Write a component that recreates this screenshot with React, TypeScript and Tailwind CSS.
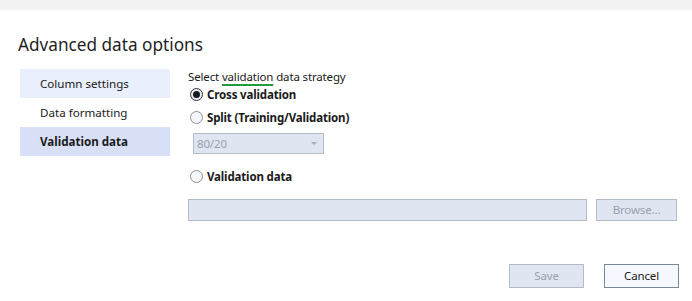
import React from "react";

function Radio({ checked }: { checked?: boolean }) {
  return (
    <span
      className={
        "flex h-[13px] w-[13px] shrink-0 items-center justify-center rounded-full border " +
        (checked ? "border-[#333333] bg-[#e6ecf7]" : "border-[#8f8f8f] bg-[#f4f6fa]")
      }
    >
      {checked && <span className="h-[7px] w-[7px] rounded-full bg-[#1a1a1a]" />}
    </span>
  );
}

export default function App() {
  return (
    <div
      className="h-[301px] w-[692px] overflow-hidden bg-white text-[#1a1a1a]"
      style={{ fontFamily: '"Noto Sans", "Open Sans", sans-serif' }}
    >
      <div className="h-[10px] bg-[#f2f2f2]" />
      <div className="pl-[18px] pt-[22px] text-[17.2px] leading-[25px] text-[#1f1f1f]">
        Advanced data options
      </div>
      <div className="mt-[12px] flex">
        <div className="ml-[20px] flex w-[150px] flex-col text-[11.6px]">
          <div className="flex h-[29px] items-center bg-[#e9effc] pl-[20px]">Column settings</div>
          <div className="flex h-[29px] items-center pl-[20px]">Data formatting</div>
          <div className="flex h-[29px] items-center bg-[#d8e0f7] pl-[20px] font-bold">Validation data</div>
        </div>
        <div className="ml-[18px] flex flex-col text-[11.5px] tracking-[-0.15px]">
          <div className="h-[17px] leading-[15px]">
            Select{" "}
            <span className="underline decoration-[#1f9d3a] decoration-2 underline-offset-[3px]">validation</span>{" "}
            data strategy
          </div>
          <div className="ml-[2px] flex h-[17px] items-center gap-[4px] font-bold">
            <Radio checked />
            Cross validation
          </div>
          <div className="ml-[2px] mt-[6px] flex h-[17px] items-center gap-[4px] font-bold">
            <Radio />
            Split (Training/Validation)
          </div>
          <div className="ml-[5px] mt-[7px] flex h-[21px] w-[131px] items-center justify-between border border-[#b4bcc8] bg-[#dfe6f1] pl-[3px] pr-[6px] text-[#9aa1ab]">
            <span>80/20</span>
            <span className="h-0 w-0 border-x-[3px] border-t-[3px] border-x-transparent border-t-[#a8adb5]" />
          </div>
          <div className="ml-[2px] mt-[14px] flex h-[17px] items-center gap-[4px] font-bold">
            <Radio />
            Validation data
          </div>
          <div className="mt-[14px] flex items-center">
            <div className="h-[22px] w-[399px] border border-[#b4bcc8] bg-[#dfe6f1]" />
            <div className="ml-[9px] flex h-[22px] w-[81px] items-center justify-center border border-[#b4bcc8] bg-[#dfe6f1] text-[#9aa1ab]">
              Browse...
            </div>
          </div>
          <div className="ml-[321px] mt-[43px] flex gap-[20px]">
            <div className="flex h-[24px] w-[75px] items-center justify-center border border-[#b4bcc8] bg-[#dfe6f1] text-[#9aa1ab]">
              Save
            </div>
            <div className="flex h-[24px] w-[75px] items-center justify-center border border-[#7a8596] bg-[#f5f8fe] text-[#1a1a1a]">
              Cancel
            </div>
          </div>
        </div>
      </div>
    </div>
  );
}
